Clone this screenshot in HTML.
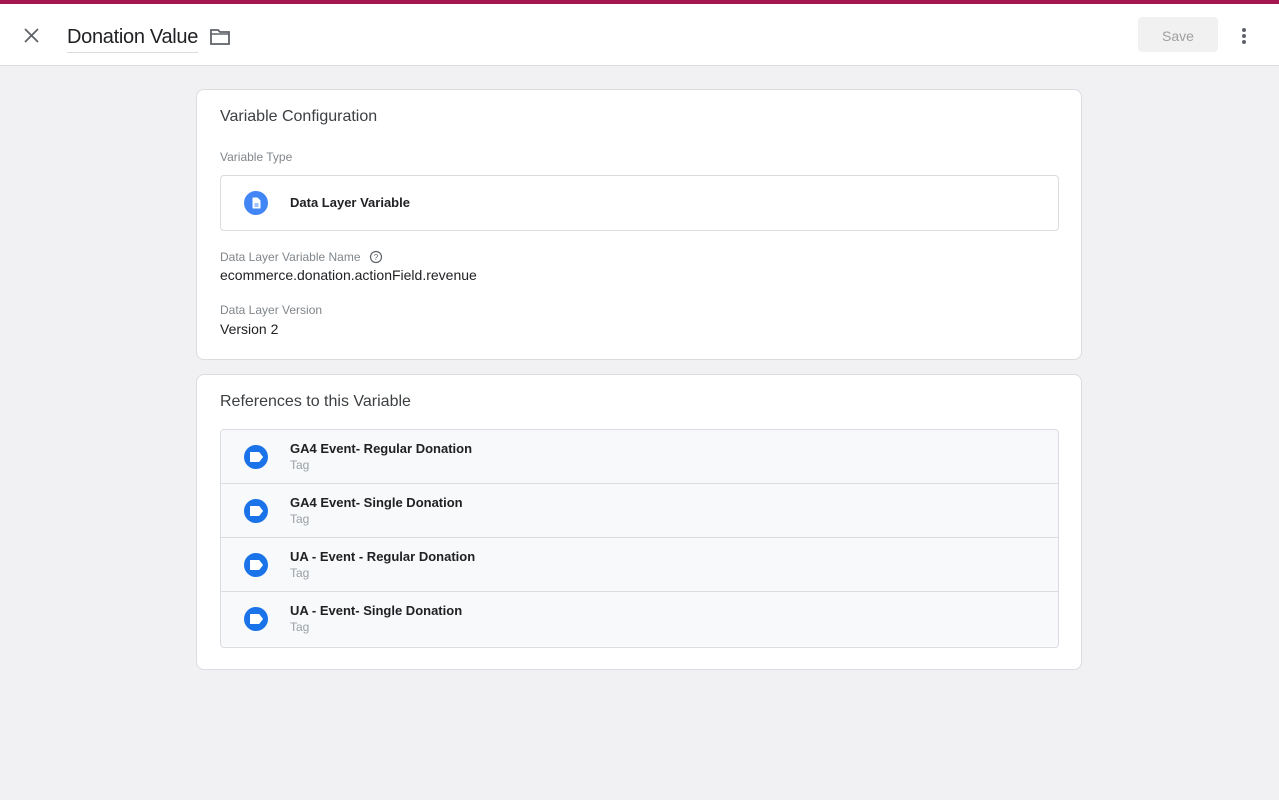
<!DOCTYPE html>
<html><head><style>
*{box-sizing:border-box;margin:0;padding:0}
body{width:1279px;height:800px;background:#f1f1f3;font-family:"Liberation Sans",Arial,sans-serif;position:relative;overflow:hidden;color:#202124}
.top{position:absolute;left:0;top:0;width:1279px;height:4px;background:#a3164f}
.hdr{position:absolute;left:0;top:4px;width:1279px;height:62px;background:#fff;border-bottom:1px solid #dadce0}
.title{position:absolute;left:67px;top:22px;font-size:20px;color:#202124;border-bottom:1px solid #dadce0;padding-bottom:3px;width:131px;white-space:nowrap;letter-spacing:-0.3px}
.save{position:absolute;left:1138px;top:13px;width:80px;height:35px;background:#f1f1f1;border-radius:4px;color:#a0a0a0;font-size:14px;text-align:center;line-height:38px}
.card{position:absolute;left:196px;width:886px;background:#fff;border:1px solid #dadce0;border-radius:8px}
.ct{position:absolute;left:23px;font-size:16px;color:#3c4043}
.lbl{position:absolute;left:23px;font-size:12px;color:#80868b}
.val{position:absolute;left:23px;font-size:14px;color:#202124}
.box{position:absolute;left:23px;width:839px;border:1px solid #dadce0;border-radius:4px}
.row{position:relative;height:54px;background:#f8f9fa;border-bottom:1px solid #dadce0}
.row:last-child{border-bottom:none}
.row .n{position:absolute;left:69px;top:11px;font-size:13px;font-weight:bold;color:#202124}
.row .s{position:absolute;left:69px;top:28px;font-size:12px;color:#9aa0a6}
.ic{position:absolute;left:23px;width:24px;height:24px;border-radius:50%;background:#1a73e8}
</style></head><body>
<div class="top"></div>
<div class="hdr">
<svg style="position:absolute;left:24px;top:24px" width="15" height="15" viewBox="0 0 15 15"><path d="M1 1L14 14M14 1L1 14" stroke="#5f6368" stroke-width="1.8"/></svg>
<div class="title">Donation Value</div>
<svg style="position:absolute;left:210px;top:25px" width="20" height="16" viewBox="0 0 20 16"><path d="M1 1h7l2 2h9v12H1z" fill="none" stroke="#5f6368" stroke-width="1.8"/><path d="M1 5h18" stroke="#5f6368" stroke-width="1.5"/></svg>
<div class="save">Save</div>
<svg style="position:absolute;left:1241px;top:23px" width="6" height="18"><circle cx="3" cy="3" r="2" fill="#5f6368"/><circle cx="3" cy="9" r="2" fill="#5f6368"/><circle cx="3" cy="15" r="2" fill="#5f6368"/></svg>
</div>
<div class="card" style="top:89px;height:271px">
<div class="ct" style="top:18px">Variable Configuration</div>
<div class="lbl" style="top:60px">Variable Type</div>
<div class="box" style="top:85px;height:56px">
<div class="ic" style="top:15px;background:#4285f4"><svg width="24" height="24"><path d="M8.5 6.5h5l3 3v8h-8z" fill="#fff"/><path d="M10.5 13h4M10.5 15h4" stroke="#4285f4" stroke-width="1"/></svg></div>
<div style="position:absolute;left:69px;top:19px;font-size:13px;font-weight:bold">Data Layer Variable</div>
</div>
<div class="lbl" style="top:160px">Data Layer Variable Name</div>
<svg style="position:absolute;left:172px;top:160px" width="14" height="14"><circle cx="7" cy="7" r="5.5" fill="none" stroke="#5f6368" stroke-width="1.2"/><text x="7" y="10" font-size="8" text-anchor="middle" fill="#5f6368" font-family="Liberation Sans">?</text></svg>
<div class="val" style="top:177px">ecommerce.donation.actionField.revenue</div>
<div class="lbl" style="top:213px">Data Layer Version</div>
<div class="val" style="top:231px">Version 2</div>
</div>
<div class="card" style="top:374px;height:296px">
<div class="ct" style="top:18px">References to this Variable</div>
<div class="box" style="top:54px;height:219px;overflow:hidden">
<div class="row"><div class="ic" style="top:15px"><svg width="24" height="24"><path d="M6.5 7.5h8.5l3.5 4.5-3.5 4.5H6.5z" fill="#fff" stroke="#fff" stroke-linejoin="round"/></svg></div><div class="n">GA4 Event- Regular Donation</div><div class="s">Tag</div></div>
<div class="row"><div class="ic" style="top:15px"><svg width="24" height="24"><path d="M6.5 7.5h8.5l3.5 4.5-3.5 4.5H6.5z" fill="#fff" stroke="#fff" stroke-linejoin="round"/></svg></div><div class="n">GA4 Event- Single Donation</div><div class="s">Tag</div></div>
<div class="row"><div class="ic" style="top:15px"><svg width="24" height="24"><path d="M6.5 7.5h8.5l3.5 4.5-3.5 4.5H6.5z" fill="#fff" stroke="#fff" stroke-linejoin="round"/></svg></div><div class="n">UA - Event - Regular Donation</div><div class="s">Tag</div></div>
<div class="row"><div class="ic" style="top:15px"><svg width="24" height="24"><path d="M6.5 7.5h8.5l3.5 4.5-3.5 4.5H6.5z" fill="#fff" stroke="#fff" stroke-linejoin="round"/></svg></div><div class="n">UA - Event- Single Donation</div><div class="s">Tag</div></div>
</div>
</div>
</body></html>
